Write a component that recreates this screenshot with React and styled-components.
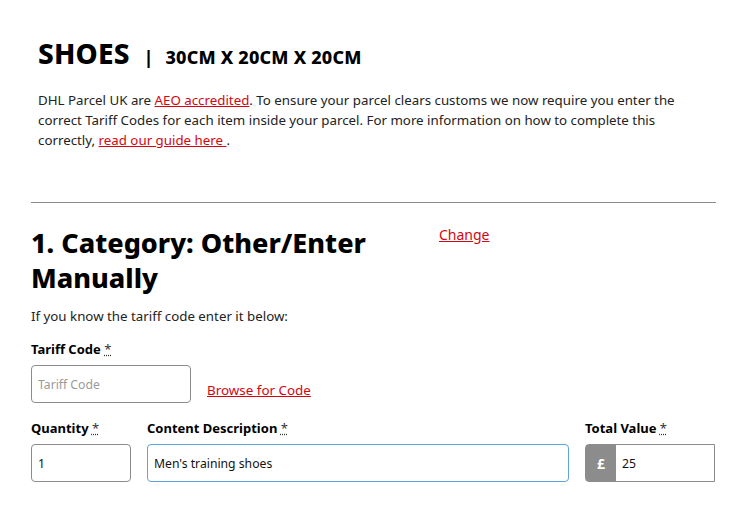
import React from 'react'
import styled, { createGlobalStyle } from 'styled-components'

const GlobalStyle = createGlobalStyle`
    body {
        margin: 0;
        background: #fff;
        font-family: "Noto Sans", "Open Sans", sans-serif;
        color: #1a1a1a;
    }
`

const Page = styled.div`
    padding: 0 30px 0 31px;
`

const Intro = styled.section`
    padding: 34px 7px 52px;
`

const Title = styled.h1`
    display: flex;
    align-items: baseline;
    margin: 0 0 18px;
    font-size: 28px;
    font-weight: 800;
    letter-spacing: 0.2px;
    color: #000;
`

const Dims = styled.span`
    margin-left: 14px;
    font-size: 18px;
    font-weight: 800;
`

const Pipe = styled.span`
    margin-right: 12px;
`

const Lead = styled.p`
    margin: 0;
    max-width: 650px;
    font-size: 13.3px;
    line-height: 20px;
    color: #222;
`

const RedLink = styled.a`
    color: #d40511;
    text-decoration: underline;
`

const Rule = styled.hr`
    margin: 0;
    border: 0;
    border-top: 1px solid #8c8c8c;
`

const Section = styled.section`
    padding-top: 22px;
`

const HeadRow = styled.div`
    display: flex;
    align-items: flex-start;
`

const Heading = styled.h2`
    width: 408px;
    margin: 0;
    font-size: 27px;
    line-height: 35px;
    font-weight: 800;
    color: #000;
`

const Change = styled(RedLink)`
    font-size: 14px;
`

const Hint = styled.p`
    margin: 12px 0 15px;
    font-size: 13.3px;
    color: #222;
`

const Label = styled.label`
    display: block;
    margin-bottom: 7px;
    font-size: 13px;
    font-weight: 700;
    color: #000;
`

const Req = styled.abbr`
    text-decoration: underline dotted;
    font-weight: 400;
    color: #333;
`

const TariffRow = styled.div`
    display: flex;
    align-items: flex-end;
    gap: 16px;
    margin-bottom: 16px;
`

const Input = styled.input`
    box-sizing: border-box;
    width: ${p => p.$width || '100%'};
    height: 38px;
    padding: 0 6px;
    border: 1px solid ${p => (p.$focused ? '#5fa3e0' : '#8c8c8c')};
    border-radius: 4px;
    font-family: inherit;
    font-size: 12.2px;
    color: #111;
    outline: none;
    &::placeholder {
        color: #9a9a9a;
    }
`

const Browse = styled(RedLink)`
    font-size: 13.4px;
    margin-bottom: 4px;
`

const FieldsRow = styled.div`
    display: grid;
    grid-template-columns: 100px 422px 130px;
    column-gap: 16px;
`

const Field = styled.div`
    display: flex;
    flex-direction: column;
`

const Money = styled.div`
    display: flex;
    height: 38px;
    box-sizing: border-box;
    border: 1px solid #8c8c8c;
    border-radius: 4px 0 0 4px;
`

const Addon = styled.span`
    display: flex;
    align-items: center;
    justify-content: center;
    width: 30px;
    background: #8c8c8c;
    color: #fff;
    font-weight: 700;
    font-size: 14px;
`

const MoneyInput = styled.input`
    flex: 1;
    min-width: 0;
    border: 0;
    padding: 0 6px;
    font-family: inherit;
    font-size: 12.2px;
    color: #111;
    outline: none;
`

const Star = () => <Req title="required">*</Req>

export default function App() {
    return (
        <>
            <GlobalStyle />
            <Page>
                <Intro>
                    <Title>
                        SHOES
                        <Dims>
                            <Pipe>|</Pipe>30CM X 20CM X 20CM
                        </Dims>
                    </Title>
                    <Lead>
                        DHL Parcel UK are <RedLink href="#">AEO accredited</RedLink>. To ensure your parcel
                        clears customs we now require you enter the correct Tariff Codes for each item inside
                        your parcel. For more information on how to complete this correctly,{' '}
                        <RedLink href="#">read our guide here </RedLink>.
                    </Lead>
                </Intro>
                <Rule />
                <Section>
                    <HeadRow>
                        <Heading>1. Category: Other/Enter Manually</Heading>
                        <Change href="#">Change</Change>
                    </HeadRow>
                    <Hint>If you know the tariff code enter it below:</Hint>
                    <Label>
                        Tariff Code <Star />
                    </Label>
                    <TariffRow>
                        <Input $width="160px" placeholder="Tariff Code" />
                        <Browse href="#">Browse for Code</Browse>
                    </TariffRow>
                    <FieldsRow>
                        <Field>
                            <Label>
                                Quantity <Star />
                            </Label>
                            <Input defaultValue="1" />
                        </Field>
                        <Field>
                            <Label>
                                Content Description <Star />
                            </Label>
                            <Input $focused defaultValue="Men's training shoes" />
                        </Field>
                        <Field>
                            <Label>
                                Total Value <Star />
                            </Label>
                            <Money>
                                <Addon>£</Addon>
                                <MoneyInput defaultValue="25" />
                            </Money>
                        </Field>
                    </FieldsRow>
                </Section>
            </Page>
        </>
    )
}
